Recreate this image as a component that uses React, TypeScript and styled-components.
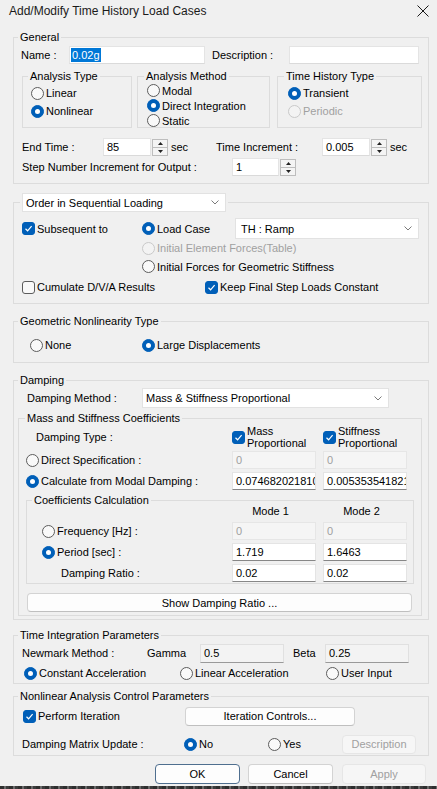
import React from 'react';
import styled, { createGlobalStyle } from 'styled-components';

const GlobalStyle = createGlobalStyle`
  html, body {
    margin: 0;
    padding: 0;
    background: #f0f0f0;
  }
  body {
    font-family: "Liberation Sans", Arial, sans-serif;
    font-size: 11px;
    color: #000;
  }
  * {
    box-sizing: border-box;
  }
`;

const Dialog = styled.div`
  width: 437px;
  height: 789px;
  display: flex;
  flex-direction: column;
  background: #f0f0f0;
  overflow: hidden;
`;

const TitleBar = styled.div`
  height: 22px;
  display: flex;
  align-items: center;
  justify-content: space-between;
  padding: 0 8px 0 9px;
`;

const TitleText = styled.span`
  font-size: 12px;
  color: #1a1a1a;
`;

const Body = styled.div`
  padding: 8px 8px 0 13px;
`;

const Group = styled.fieldset<{ $mt?: number; $pb?: number; $ml?: number; $mr?: number; $h?: number; $w?: number }>`
  margin: ${p => p.$mt ?? 0}px ${p => p.$mr ?? 0}px 0 ${p => p.$ml ?? 0}px;
  padding: 0 0 ${p => p.$pb ?? 0}px 0;
  border: 1px solid #dcdcdc;
  min-width: 0;
  ${p => (p.$h ? `height: ${p.$h}px;` : '')}
  ${p => (p.$w ? `width: ${p.$w}px; flex: none;` : '')}
`;

const Legend = styled.legend<{ $ml?: number }>`
  margin-left: ${p => p.$ml ?? 4}px;
  padding: 0 2px;
  line-height: 14px;
  font-size: 11px;
  color: #000;
`;

const Row = styled.div<{ $mt?: number; $h: number; $pl?: number }>`
  display: flex;
  align-items: center;
  height: ${p => p.$h}px;
  margin-top: ${p => p.$mt ?? 0}px;
  padding-left: ${p => p.$pl ?? 0}px;
  white-space: nowrap;
`;

const Cell = styled.div<{ $w?: number; $ml?: number; $pl?: number }>`
  flex: none;
  ${p => (p.$w ? `width: ${p.$w}px;` : '')}
  margin-left: ${p => p.$ml ?? 0}px;
  padding-left: ${p => p.$pl ?? 0}px;
  display: flex;
  align-items: center;
  white-space: nowrap;
`;

const SubGroups = styled.div`
  display: flex;
  margin-top: 5px;
  padding-left: 8px;
`;

const Stack = styled.div<{ $mt?: number; $pl?: number; $row: number }>`
  display: flex;
  flex-direction: column;
  margin-top: ${p => p.$mt ?? 0}px;
  padding-left: ${p => p.$pl ?? 0}px;
  & > * {
    height: ${p => p.$row}px;
  }
`;

const Choice = styled.label<{ $disabled?: boolean }>`
  display: inline-flex;
  align-items: center;
  gap: 2px;
  color: ${p => (p.$disabled ? '#a0a0a0' : '#000')};
  white-space: nowrap;
`;

const RadioMark = styled.span<{ $on?: boolean; $disabled?: boolean }>`
  width: 13px;
  height: 13px;
  flex: none;
  border-radius: 50%;
  display: flex;
  align-items: center;
  justify-content: center;
  border: 1px solid ${p => (p.$on ? '#005fb8' : p.$disabled ? '#c9c9c9' : '#5c5c5c')};
  background: ${p => (p.$on ? '#005fb8' : p.$disabled ? '#f3f3f3' : '#f9f9f9')};
  &::after {
    content: '';
    display: ${p => (p.$on ? 'block' : 'none')};
    width: 5px;
    height: 5px;
    border-radius: 50%;
    background: #fff;
  }
`;

const CheckMark = styled.span<{ $on?: boolean }>`
  width: 13px;
  height: 13px;
  flex: none;
  border-radius: 3px;
  display: flex;
  align-items: center;
  justify-content: center;
  border: 1px solid ${p => (p.$on ? '#005fb8' : '#5c5c5c')};
  background: ${p => (p.$on ? '#005fb8' : '#f9f9f9')};
`;

const TwoLines = styled.span`
  display: flex;
  flex-direction: column;
  line-height: 12px;
`;

const TextBox = styled.div<{ $w: number; $h?: number; $kind?: 'plain' | 'under' | 'disabled' | 'readonly'; $pl?: number }>`
  flex: none;
  width: ${p => p.$w}px;
  height: ${p => p.$h ?? 18}px;
  display: flex;
  align-items: center;
  padding-left: ${p => p.$pl ?? 3}px;
  overflow: hidden;
  white-space: nowrap;
  border: 1px solid ${p => (p.$kind === 'disabled' ? '#e6e6e6' : p.$kind === 'readonly' ? '#e0e0e0' : '#e4e4e4')};
  border-bottom-color: ${p =>
    p.$kind === 'under' ? '#878787' : p.$kind === 'readonly' ? '#9a9a9a' : p.$kind === 'disabled' ? '#e6e6e6' : '#dadada'};
  background: ${p => (p.$kind === 'disabled' ? '#f5f5f5' : p.$kind === 'readonly' ? '#f3f3f3' : '#fff')};
  color: ${p => (p.$kind === 'disabled' ? '#a0a0a0' : '#000')};
`;

const Selection = styled.span`
  background: #0078d7;
  color: #fff;
  line-height: 14px;
  padding: 0 1px;
`;

const SpinBox = styled.div`
  flex: none;
  width: 16px;
  height: 17px;
  margin-left: 1px;
  display: flex;
  flex-direction: column;
  border: 1px solid #bdbdbd;
  background: #f4f4f4;
`;

const SpinHalf = styled.div`
  flex: 1;
  display: flex;
  align-items: center;
  justify-content: center;
  & + & {
    border-top: 1px solid #bdbdbd;
  }
`;

const Unit = styled.span<{ $ml?: number }>`
  margin-left: ${p => p.$ml ?? 3}px;
  flex: none;
`;

const Combo = styled.div<{ $w: number; $h: number; $pl?: number }>`
  flex: none;
  width: ${p => p.$w}px;
  height: ${p => p.$h}px;
  display: flex;
  align-items: center;
  justify-content: space-between;
  padding: 0 6px 0 ${p => p.$pl ?? 3}px;
  background: #fff;
  border: 1px solid #e2e2e2;
  white-space: nowrap;
`;

const Button = styled.div<{ $w: number; $h?: number; $ml?: number; $default?: boolean; $disabled?: boolean }>`
  flex: none;
  width: ${p => p.$w}px;
  height: ${p => p.$h ?? 19}px;
  margin-left: ${p => p.$ml ?? 0}px;
  display: flex;
  align-items: center;
  justify-content: center;
  border-radius: 4px;
  border: 1px solid ${p => (p.$default ? '#4f6f8f' : p.$disabled ? '#e6e6e6' : '#d3d3d3')};
  border-bottom-color: ${p => (p.$default ? '#4f6f8f' : p.$disabled ? '#e6e6e6' : '#bfbfbf')};
  background: ${p => (p.$disabled ? '#f6f6f6' : '#fdfdfd')};
  color: ${p => (p.$disabled ? '#a0a0a0' : '#000')};
  white-space: nowrap;
`;

const SeqGrid = styled.div`
  display: grid;
  grid-template-columns: 120px 93px 184px;
  grid-template-rows: 21px 18px 19px;
  align-items: center;
  margin-top: 6px;
  padding-left: 8px;
`;

const GridSpan = styled.div<{ $from: number; $to: number }>`
  grid-column: ${p => p.$from} / ${p => p.$to};
  display: flex;
  align-items: center;
`;

/* first column width is measured up to the first value box, gap included */
const CoefRow = styled.div<{ $first: number; $mt?: number; $h: number }>`
  display: grid;
  grid-template-columns: ${p => p.$first - 7}px 84px 84px;
  column-gap: 7px;
  align-items: center;
  height: ${p => p.$h}px;
  margin-top: ${p => p.$mt ?? 0}px;
  white-space: nowrap;
`;

const ModeHead = styled.div`
  text-align: center;
  padding-right: 7px;
`;

const Footer = styled.div`
  display: flex;
  justify-content: flex-end;
  margin-top: 8px;
  padding-right: 11px;
`;

const BottomEdge = styled.div`
  margin-top: auto;
  height: 3px;
  background: repeating-linear-gradient(90deg, #2e2e2e 0 4px, #6a6a6a 4px 6px, #3c3c3c 6px 9px);
`;

const Chevron = () => (
  <svg width="8" height="5" viewBox="0 0 8 5">
    <polyline points="0.5,0.5 4,4 7.5,0.5" fill="none" stroke="#7a7a7a" strokeWidth="1" />
  </svg>
);

const CloseIcon = () => (
  <svg width="12" height="12" viewBox="0 0 12 12">
    <path d="M0.5 0.5 L11.5 11.5 M11.5 0.5 L0.5 11.5" stroke="#1a1a1a" strokeWidth="1" />
  </svg>
);

const Radio = ({ label, on, disabled }: { label: string; on?: boolean; disabled?: boolean }) => (
  <Choice $disabled={disabled}>
    <RadioMark $on={on} $disabled={disabled} />
    {label}
  </Choice>
);

const Check = ({ label, on }: { label: React.ReactNode; on?: boolean }) => (
  <Choice>
    <CheckMark $on={on}>
      {on && (
        <svg width="9" height="9" viewBox="0 0 9 9">
          <polyline points="1.5,4.8 3.6,6.8 7.6,2.2" fill="none" stroke="#fff" strokeWidth="1.2" />
        </svg>
      )}
    </CheckMark>
    {label}
  </Choice>
);

const Spin = () => (
  <SpinBox>
    <SpinHalf>
      <svg width="5" height="3" viewBox="0 0 5 3">
        <polygon points="0,3 2.5,0 5,3" fill="#222" />
      </svg>
    </SpinHalf>
    <SpinHalf>
      <svg width="5" height="3" viewBox="0 0 5 3">
        <polygon points="0,0 5,0 2.5,3" fill="#222" />
      </svg>
    </SpinHalf>
  </SpinBox>
);

const App: React.FC = () => {
  return (
    <>
      <GlobalStyle />
      <Dialog>
        <TitleBar>
          <TitleText>Add/Modify Time History Load Cases</TitleText>
          <CloseIcon />
        </TitleBar>

        <Body>
          <Group $pb={7}>
            <Legend $ml={4}>General</Legend>
            <Row $mt={2} $h={18} $pl={7}>
              <Cell $w={48}>Name :</Cell>
              <TextBox $w={136} $pl={1}>
                <Selection>0.02g</Selection>
              </TextBox>
              <Cell $w={77} $ml={7}>Description :</Cell>
              <TextBox $w={130} />
            </Row>

            <SubGroups>
              <Group $w={110} $h={59}>
                <Legend $ml={5}>Analysis Type</Legend>
                <Stack $mt={1} $pl={8} $row={18}>
                  <Radio label="Linear" />
                  <Radio label="Nonlinear" on />
                </Stack>
              </Group>
              <Group $w={133} $h={59} $ml={5}>
                <Legend $ml={6}>Analysis Method</Legend>
                <Stack $pl={9} $row={15}>
                  <Radio label="Modal" />
                  <Radio label="Direct Integration" on />
                  <Radio label="Static" />
                </Stack>
              </Group>
              <Group $w={145} $h={59} $ml={7}>
                <Legend $ml={6}>Time History Type</Legend>
                <Stack $mt={1} $pl={10} $row={18}>
                  <Radio label="Transient" on />
                  <Radio label="Periodic" disabled />
                </Stack>
              </Group>
            </SubGroups>

            <Row $mt={10} $h={18} $pl={8}>
              <Cell $w={81}>End Time :</Cell>
              <TextBox $w={48}>85</TextBox>
              <Spin />
              <Cell $w={48} $pl={3}>sec</Cell>
              <Cell $w={106}>Time Increment :</Cell>
              <TextBox $w={48}>0.005</TextBox>
              <Spin />
              <Unit>sec</Unit>
            </Row>
            <Row $mt={2} $h={18} $pl={8}>
              <Cell $w={210}>Step Number Increment for Output :</Cell>
              <TextBox $w={47}>1</TextBox>
              <Spin />
            </Row>
          </Group>

          <Group $mt={9} $pb={6}>
            <Legend $ml={6}>
              <Combo $w={204} $h={19}>
                Order in Sequential Loading
                <Chevron />
              </Combo>
            </Legend>
            <SeqGrid>
              <Check label="Subsequent to" on />
              <Radio label="Load Case" on />
              <Combo $w={184} $h={21} $pl={5}>
                TH : Ramp
                <Chevron />
              </Combo>
              <GridSpan $from={2} $to={4}>
                <Radio label="Initial Element Forces(Table)" disabled />
              </GridSpan>
              <GridSpan $from={2} $to={4}>
                <Radio label="Initial Forces for Geometric Stiffness" />
              </GridSpan>
            </SeqGrid>
            <Row $mt={1} $h={20} $pl={8}>
              <Cell $w={183}>
                <Check label="Cumulate D/V/A Results" />
              </Cell>
              <Check label="Keep Final Step Loads Constant" on />
            </Row>
          </Group>

          <Group $mt={10} $pb={7}>
            <Legend $ml={4}>Geometric Nonlinearity Type</Legend>
            <Row $mt={7} $h={20} $pl={16}>
              <Cell $w={112}>
                <Radio label="None" />
              </Cell>
              <Radio label="Large Displacements" on />
            </Row>
          </Group>

          <Group $mt={10} $pb={3}>
            <Legend $ml={4}>Damping</Legend>
            <Row $mt={1} $h={20} $pl={13}>
              <Cell $w={115}>Damping Method :</Cell>
              <Combo $w={247} $h={20}>
                Mass &amp; Stiffness Proportional
                <Chevron />
              </Combo>
            </Row>

            <Group $mt={3} $ml={4} $mr={6} $pb={3}>
              <Legend $ml={6}>Mass and Stiffness Coefficients</Legend>
              <CoefRow $first={213} $h={22}>
                <Cell $pl={17}>Damping Type :</Cell>
                <Check label={<TwoLines><span>Mass</span><span>Proportional</span></TwoLines>} on />
                <Check label={<TwoLines><span>Stiffness</span><span>Proportional</span></TwoLines>} on />
              </CoefRow>
              <CoefRow $first={213} $h={20} $mt={3}>
                <Cell $pl={7}>
                  <Radio label="Direct Specification :" />
                </Cell>
                <TextBox $w={84} $kind="disabled">0</TextBox>
                <TextBox $w={84} $kind="disabled">0</TextBox>
              </CoefRow>
              <CoefRow $first={213} $h={20} $mt={1}>
                <Cell $pl={7}>
                  <Radio label="Calculate from Modal Damping :" on />
                </Cell>
                <TextBox $w={84} $kind="under">0.074682021810</TextBox>
                <TextBox $w={84} $kind="under">0.005353541821</TextBox>
              </CoefRow>

              <Group $mt={2} $ml={7} $mr={7}>
                <Legend $ml={5}>Coefficients Calculation</Legend>
                <CoefRow $first={205} $h={14} $mt={-3}>
                  <span />
                  <ModeHead>Mode 1</ModeHead>
                  <ModeHead>Mode 2</ModeHead>
                </CoefRow>
                <CoefRow $first={205} $h={20} $mt={3}>
                  <Cell $pl={15}>
                    <Radio label="Frequency [Hz] :" />
                  </Cell>
                  <TextBox $w={84} $kind="disabled">0</TextBox>
                  <TextBox $w={84} $kind="disabled">0</TextBox>
                </CoefRow>
                <CoefRow $first={205} $h={20} $mt={1}>
                  <Cell $pl={15}>
                    <Radio label="Period [sec] :" on />
                  </Cell>
                  <TextBox $w={84} $kind="under">1.719</TextBox>
                  <TextBox $w={84} $kind="under">1.6463</TextBox>
                </CoefRow>
                <CoefRow $first={205} $h={20} $mt={1}>
                  <Cell $pl={34}>Damping Ratio :</Cell>
                  <TextBox $w={84} $kind="under">0.02</TextBox>
                  <TextBox $w={84} $kind="under">0.02</TextBox>
                </CoefRow>
              </Group>

              <Row $mt={9} $h={19} $pl={8}>
                <Button $w={385}>Show Damping Ratio ...</Button>
              </Row>
            </Group>
          </Group>

          <Group $mt={8} $pb={1}>
            <Legend $ml={4}>Time Integration Parameters</Legend>
            <Row $mt={1} $h={20} $pl={8}>
              <Cell $w={125}>Newmark Method :</Cell>
              <Cell $w={53}>Gamma</Cell>
              <TextBox $w={84} $h={19} $kind="readonly">0.5</TextBox>
              <Cell $w={32} $ml={9}>Beta</Cell>
              <TextBox $w={84} $h={19} $kind="readonly">0.25</TextBox>
            </Row>
            <Row $mt={1} $h={18} $pl={10}>
              <Cell $w={156}>
                <Radio label="Constant Acceleration" on />
              </Cell>
              <Cell $w={146}>
                <Radio label="Linear Acceleration" />
              </Cell>
              <Radio label="User Input" />
            </Row>
          </Group>

          <Group $mt={5} $pb={1}>
            <Legend $ml={4}>Nonlinear Analysis Control Parameters</Legend>
            <Row $mt={3} $h={20} $pl={9}>
              <Cell $w={162}>
                <Check label="Perform Iteration" on />
              </Cell>
              <Button $w={170}>Iteration Controls...</Button>
            </Row>
            <Row $mt={8} $h={20} $pl={8}>
              <Cell $w={162}>Damping Matrix Update :</Cell>
              <Cell $w={84}>
                <Radio label="No" on />
              </Cell>
              <Cell $w={74}>
                <Radio label="Yes" />
              </Cell>
              <Button $w={74} $disabled>Description</Button>
            </Row>
          </Group>
        </Body>

        <Footer>
          <Button $w={85} $h={20} $default>OK</Button>
          <Button $w={85} $h={20} $ml={8}>Cancel</Button>
          <Button $w={84} $h={20} $ml={9} $disabled>Apply</Button>
        </Footer>
        <BottomEdge />
      </Dialog>
    </>
  );
};

export default App;
